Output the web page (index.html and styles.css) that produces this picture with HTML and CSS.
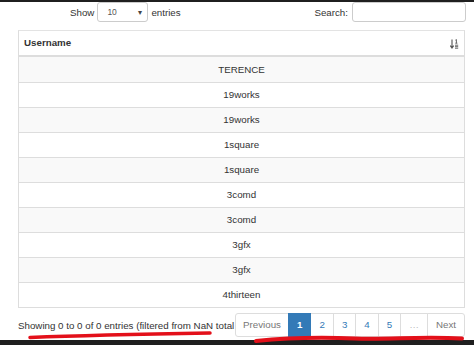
FILE: index.html
```html
<!DOCTYPE html>
<html>
<head>
<meta charset="utf-8">
<link rel="stylesheet" href="styles.css">
</head>
<body>
<div class="page">
  <div class="topbar"></div>
  <div class="controls">
    <div class="length">
      <span>Show</span>
      <div class="select"><span>10</span><span class="caret">▾</span></div>
      <span>entries</span>
    </div>
    <div class="search">
      <span>Search:</span>
      <div class="input"></div>
    </div>
  </div>
  <div class="table-wrap">
    <table class="grid">
      <thead>
        <tr><th><span>Username</span>
          <svg class="sort" width="9" height="10" viewBox="0 0 9 10">
            <path d="M2 0.5V8.5M0.3 6.6L2 9L3.7 6.6" fill="none" stroke="#555" stroke-width="1.1"/>
            <path d="M5.4 1.2L6.4 0.5V4.2M5.3 4.2H7.4" fill="none" stroke="#555" stroke-width="0.9"/>
            <path d="M5 6.2H8.2M5 7.7H8.2M5 9.2H8.2" fill="none" stroke="#555" stroke-width="0.9"/>
          </svg>
        </th></tr>
      </thead>
      <tbody>
        <tr><td>TERENCE</td></tr>
        <tr><td>19works</td></tr>
        <tr><td>19works</td></tr>
        <tr><td>1square</td></tr>
        <tr><td>1square</td></tr>
        <tr><td>3comd</td></tr>
        <tr><td>3comd</td></tr>
        <tr><td>3gfx</td></tr>
        <tr><td>3gfx</td></tr>
        <tr><td>4thirteen</td></tr>
      </tbody>
    </table>
  </div>
  <div class="footer">
    <div class="info">Showing 0 to 0 of 0 entries (filtered from NaN total</div>
    <ul class="pagination">
      <li class="pg prev">Previous</li>
      <li class="pg active">1</li>
      <li class="pg">2</li>
      <li class="pg">3</li>
      <li class="pg">4</li>
      <li class="pg">5</li>
      <li class="pg ellipsis">…</li>
      <li class="pg next">Next</li>
    </ul>
  </div>
  <div class="bottombar"></div>
  <svg class="annot" width="474" height="345" viewBox="0 0 474 345">
    <path d="M30 337.5 C 80 335.5, 150 334, 210 333" fill="none" stroke="#e3101a" stroke-width="3.5" stroke-linecap="round"/>
    <path d="M256 341 C 290 337.5, 320 337, 355 338.5 C 390 339.5, 420 336.5, 462 338.5" fill="none" stroke="#e3101a" stroke-width="4" stroke-linecap="round"/>
  </svg>
</div>
</body>
</html>
```

FILE: styles.css
```css
* { box-sizing: border-box; }
html, body {
  margin: 0;
  padding: 0;
  background: #fff;
}
body {
  font-family: "Liberation Sans", Arial, sans-serif;
  font-size: 9.75px;
  color: #333;
  width: 474px;
  height: 345px;
  overflow: hidden;
}
.page {
  position: relative;
  width: 474px;
  height: 345px;
}
.topbar {
  height: 2px;
  background: #1f1f1f;
}
.controls {
  height: 20px;
  display: flex;
  justify-content: space-between;
  align-items: center;
  padding: 0 8px 0 70px;
}
.length, .search {
  display: flex;
  align-items: center;
  height: 20px;
}
.select {
  width: 51px;
  height: 20px;
  margin: 0 3px 0 3px;
  border: 1px solid #ccc;
  border-radius: 3px;
  display: flex;
  align-items: center;
  justify-content: space-between;
  padding: 0 5px 0 9px;
  font-size: 8.5px;
  color: #555;
}
.caret {
  font-size: 8px;
  color: #444;
}
.search span {
  margin-right: 4px;
}
.input {
  width: 114px;
  height: 20px;
  border: 1px solid #ccc;
  border-radius: 3px;
}
.table-wrap {
  margin: 8px 9px 0 18px;
}
.grid {
  width: 100%;
  border-collapse: separate;
  border-spacing: 0;
  border: 1px solid #ddd;
  border-top: 1px solid #e3e3e3;
}
.grid th {
  height: 26px;
  padding: 0 6px 0 5px;
  text-align: left;
  font-weight: bold;
  border-bottom: 2px solid #ddd;
  position: relative;
}
.grid th span {
  display: inline-block;
  line-height: 24px;
}
.sort {
  position: absolute;
  right: 5px;
  top: 8px;
}
.grid td {
  height: 25px;
  padding: 0;
  text-align: center;
  border-top: 1px solid #ddd;
  line-height: 24px;
}
.grid tbody tr:first-child td {
  border-top: none;
}
.grid tbody tr:nth-child(odd) td {
  background: #f9f9f9;
}
.footer {
  display: flex;
  justify-content: space-between;
  align-items: center;
  margin: 5px 9px 0 18px;
  height: 24px;
}
.info {
  white-space: nowrap;
}
.pagination {
  display: flex;
  list-style: none;
  margin: 0;
  padding: 0;
  height: 24px;
}
.pg {
  height: 24px;
  line-height: 22px;
  padding: 0 8px;
  border: 1px solid #ddd;
  margin-left: -1px;
  color: #337ab7;
  background: #fff;
}
.pg.prev {
  margin-left: 0;
  border-radius: 3px 0 0 3px;
  color: #777;
  padding: 0 7px;
}
.pg.next {
  border-radius: 0 3px 3px 0;
  color: #777;
}
.pg.ellipsis {
  color: #bbb;
}
.pg.active {
  background: #337ab7;
  border-color: #337ab7;
  color: #fff;
  font-weight: bold;
  position: relative;
}
.bottombar {
  margin-top: 3px;
  height: 5px;
  background: #1f1f1f;
}
.annot {
  position: absolute;
  left: 0;
  top: 0;
  pointer-events: none;
}
```
